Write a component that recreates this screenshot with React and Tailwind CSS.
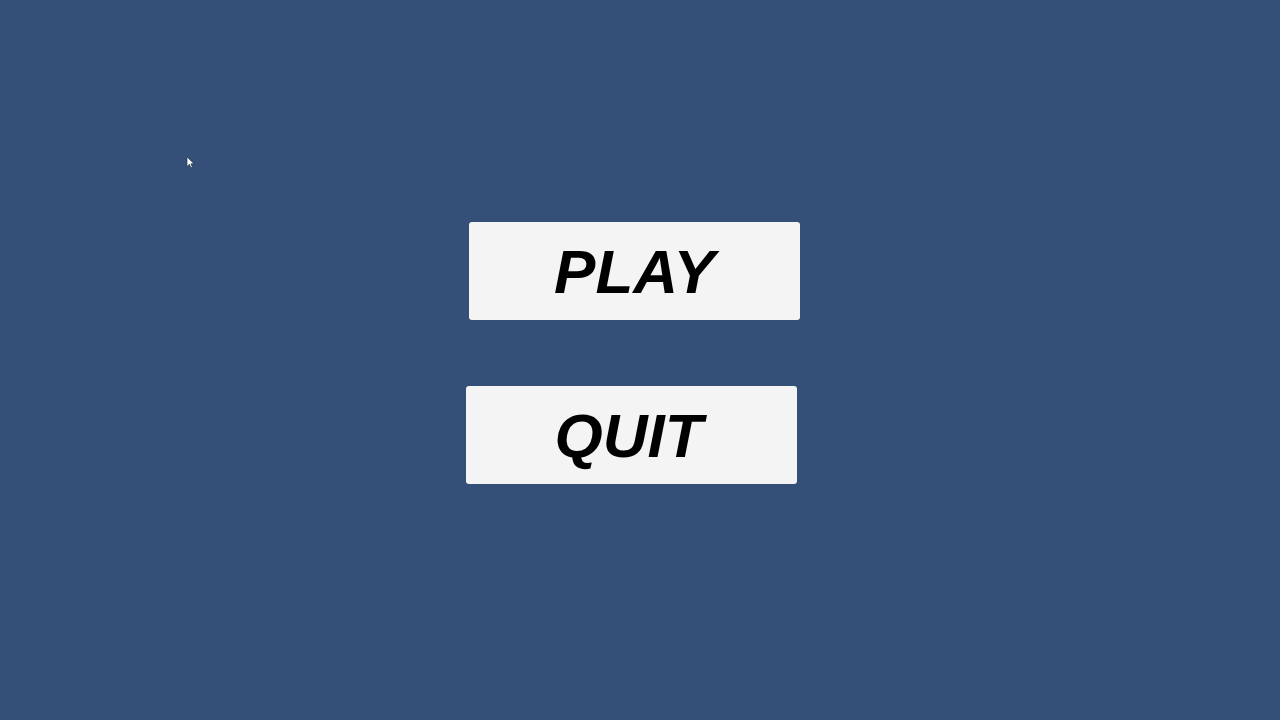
export default function App() {
  return (
    <div
      className="relative w-full h-[720px] bg-[#345078] overflow-hidden"
      style={{ fontFamily: '"Liberation Sans", Arial, sans-serif' }}
    >
      {/* mouse pointer */}
      <svg
        className="absolute left-[186px] top-[156px]"
        width="9"
        height="13"
        viewBox="0 0 9 13"
      >
        <path d="M1 1 L1 10.5 L3.4 8.3 L5 11.8 L6.4 11.2 L4.9 7.8 L8 7.8 Z" fill="#ffffff" stroke="#1a2a40" strokeWidth="0.6" />
      </svg>

      <div className="flex flex-col items-start pt-[222px]">
        <button className="ml-[469px] w-[331px] h-[98px] rounded-[3px] bg-[#f4f4f4] flex items-center justify-center">
          <span className="text-[62px] leading-none font-bold italic text-black pt-[2px]">
            PLAY
          </span>
        </button>
        <button className="ml-[466px] mt-[66px] w-[331px] h-[98px] rounded-[3px] bg-[#f4f4f4] flex items-center justify-center">
          <span className="text-[62px] leading-none font-bold italic text-black pt-[2px] pr-[6px]">
            QUIT
          </span>
        </button>
      </div>
    </div>
  );
}
